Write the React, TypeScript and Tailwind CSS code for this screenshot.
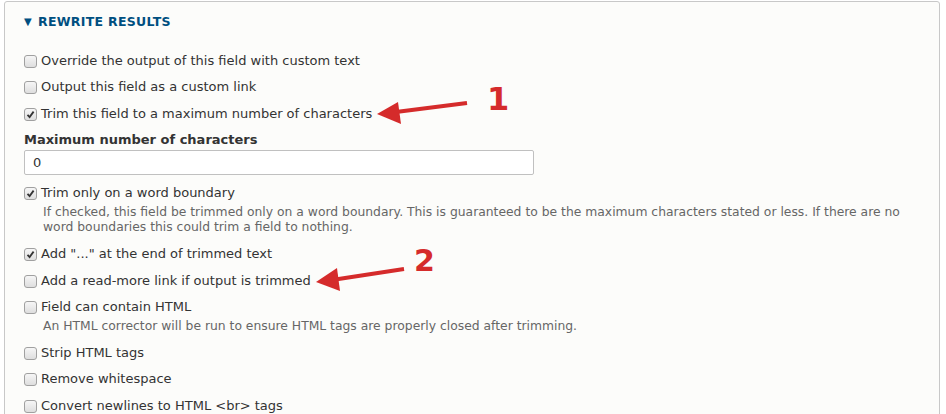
import React from "react";

function Box({ checked }: { checked?: boolean }) {
  return (
    <span className="mr-[4px] inline-flex h-[13px] w-[13px] shrink-0 items-center justify-center rounded-[3px] border border-[#a0a0a0] bg-gradient-to-b from-[#f6f6f6] to-[#dedede]">
      {checked && (
        <svg width="9" height="9" viewBox="0 0 9 9">
          <path d="M1.5 4.8 L3.6 7 L7.6 1.6" fill="none" stroke="#333" strokeWidth="1.8" />
        </svg>
      )}
    </span>
  );
}

function Row({ checked, label, cls }: { checked?: boolean; label: string; cls: string }) {
  return (
    <div className={"flex h-[18px] items-center leading-[18px] " + cls}>
      <Box checked={checked} />
      <span>{label}</span>
    </div>
  );
}

export default function App() {
  return (
    <div className="relative h-[414px] w-[946px] overflow-hidden bg-white font-['DejaVu_Sans',sans-serif] text-[13px] text-[#333]">
      <div className="ml-[4px] mt-[1px] h-[430px] w-[936px] rounded-t-[3px] border border-[#c8c8c8] bg-[#fcfcfa] px-[19px]">
        <div className="flex items-center pt-[11px] text-[12.5px] font-bold leading-[18px] tracking-[0.3px] text-[#004f80]">
          <span className="mr-[6px] text-[10px]">▼</span>
          <span>REWRITE RESULTS</span>
        </div>

        <Row label="Override the output of this field with custom text" cls="mt-[21px]" />
        <Row label="Output this field as a custom link" cls="mt-[8px]" />
        <Row checked label="Trim this field to a maximum number of characters" cls="mt-[9px]" />

        <div className="mt-[8px] font-bold leading-[18px]">Maximum number of characters</div>
        <div className="mt-[1px] flex h-[25px] w-[510px] items-center rounded-[2px] border border-[#c0c0c0] bg-white px-[8px]">
          0
        </div>

        <Row checked label="Trim only on a word boundary" cls="mt-[9px]" />
        <p className="mt-[2.5px] pl-[19px] text-[12.35px] leading-[15px] text-[#666]">
          If checked, this field be trimmed only on a word boundary. This is guaranteed to be the maximum characters stated or less. If there are no word boundaries this could trim a field to nothing.
        </p>

        <Row checked label={'Add "..." at the end of trimmed text'} cls="mt-[10.5px]" />
        <Row label="Add a read-more link if output is trimmed" cls="mt-[9px]" />
        <Row label="Field can contain HTML" cls="mt-[8px]" />
        <p className="mt-[2.5px] pl-[19px] text-[12.35px] leading-[15px] text-[#666]">
          An HTML corrector will be run to ensure HTML tags are properly closed after trimming.
        </p>
        <Row label="Strip HTML tags" cls="mt-[10.5px]" />
        <Row label="Remove whitespace" cls="mt-[8px]" />
        <Row label="Convert newlines to HTML <br> tags" cls="mt-[9px]" />
      </div>

      {/* annotations */}
      <svg className="pointer-events-none absolute left-0 top-0" width="946" height="414">
        <line x1="467" y1="103" x2="392" y2="112.5" stroke="#d52b2b" strokeWidth="4" />
        <polygon points="377,114 398,102 401,124" fill="#d52b2b" />
        <line x1="404" y1="269" x2="332" y2="280" stroke="#d52b2b" strokeWidth="4" />
        <polygon points="316,282 337,268 340,291" fill="#d52b2b" />
      </svg>
      <span className="absolute left-[487px] top-[81px] font-['DejaVu_Sans',sans-serif] text-[32px] font-bold leading-[36px] text-[#d52b2b]">
        1
      </span>
      <span className="absolute left-[414px] top-[243px] font-['DejaVu_Sans',sans-serif] text-[30px] font-bold leading-[36px] text-[#d52b2b]">
        2
      </span>
    </div>
  );
}
